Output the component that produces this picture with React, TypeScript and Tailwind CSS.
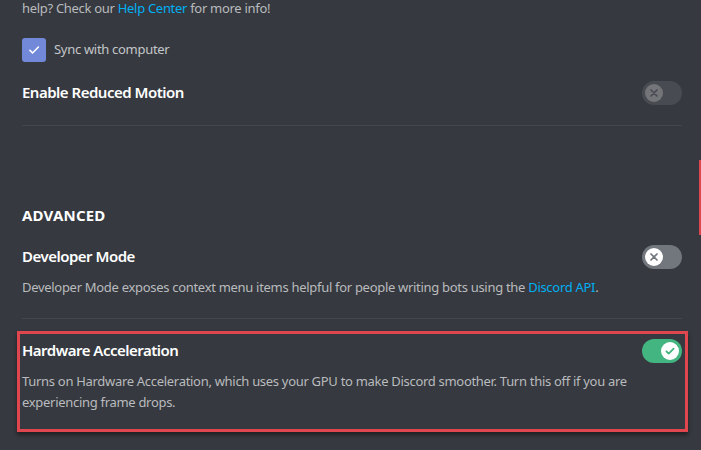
import React from 'react';

const font = { fontFamily: '"Noto Sans", "Liberation Sans", sans-serif' };

function Toggle({ on, dim }: { on?: boolean; dim?: boolean }) {
  return (
    <div
      className={`relative flex h-6 w-10 shrink-0 items-center rounded-full ${
        on ? 'bg-[#43b581] justify-end' : 'bg-[#72767d] justify-start'
      } ${dim ? 'opacity-30' : ''} px-[3px]`}
    >
      <div className="flex h-[18px] w-[18px] items-center justify-center rounded-full bg-white">
        {on ? (
          <svg width="12" height="12" viewBox="0 0 20 20" fill="none">
            <path d="M4 10.5l3.8 3.8L16 6" stroke="#43b581" strokeWidth="3" strokeLinecap="round" strokeLinejoin="round" />
          </svg>
        ) : (
          <svg width="10" height="10" viewBox="0 0 20 20" fill="none">
            <path d="M4 4l12 12M16 4L4 16" stroke="#72767d" strokeWidth="3.5" strokeLinecap="round" />
          </svg>
        )}
      </div>
    </div>
  );
}

function SettingRow({
  title,
  on,
  dim,
  children,
}: {
  title: string;
  on?: boolean;
  dim?: boolean;
  children?: React.ReactNode;
}) {
  return (
    <div>
      <div className="flex h-6 items-center justify-between">
        <div className="-mt-[1px] text-[15px] font-semibold tracking-[-0.5px] text-white">{title}</div>
        <Toggle on={on} dim={dim} />
      </div>
      {children && (
        <div className="mt-2 text-[13px] leading-[21px] tracking-[-0.3px] text-[#b9bbbe]">{children}</div>
      )}
    </div>
  );
}

export default function App() {
  return (
    <div className="relative h-[450px] w-[701px] overflow-hidden bg-[#36393f]" style={font}>
      <div className="pl-[22px] pr-[19px]">
        <div className="-mt-[2px] text-[13px] leading-5 tracking-[-0.3px] text-[#b9bbbe]">
          help? Check our <span className="text-[#00b0f4]">Help Center</span> for more info!
        </div>

        <div className="mt-5 flex items-center gap-2">
          <div className="flex h-6 w-6 items-center justify-center rounded-[3px] bg-[#7289da]">
            <svg width="16" height="16" viewBox="0 0 20 20" fill="none">
              <path d="M5 10.5l3.2 3.2L15.5 6.3" stroke="white" strokeWidth="2" strokeLinecap="round" strokeLinejoin="round" />
            </svg>
          </div>
          <span className="text-[13px] tracking-[-0.3px] text-[#c4c6c9]">Sync with computer</span>
        </div>

        <div className="mt-[19px]">
          <SettingRow title="Enable Reduced Motion" dim />
        </div>

        <div className="mt-5 h-px bg-[#4f545c]/50" />

        <div className="mt-[78px] text-[15px] font-bold uppercase tracking-[0.2px] text-white">Advanced</div>

        <div className="mt-[18px]">
          <SettingRow title="Developer Mode">
            Developer Mode exposes context menu items helpful for people writing bots using the{' '}
            <span className="text-[#00b0f4]">Discord API</span>.
          </SettingRow>
        </div>

        <div className="mt-[20px] h-px bg-[#4f545c]/50" />

        <div className="relative mt-5">
          <SettingRow title="Hardware Acceleration" on>
            Turns on Hardware Acceleration, which uses your GPU to make Discord smoother. Turn this off if you are
            experiencing frame drops.
          </SettingRow>
          <div className="pointer-events-none absolute -left-[5px] -right-[6px] -top-[8px] h-[101px] border-[3px] border-[#e0464e] shadow-[0_3px_4px_rgba(0,0,0,0.45)]" />
        </div>
      </div>
      <div className="absolute right-0 top-[160px] h-[75px] w-[2px] bg-[#e0464e]" />
    </div>
  );
}
